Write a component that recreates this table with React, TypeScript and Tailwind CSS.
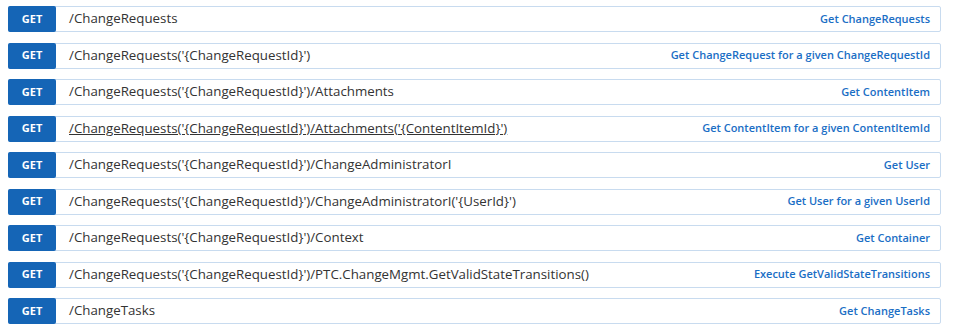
const rows: { path: string; desc: string; hover?: boolean }[] = [
  { path: "/ChangeRequests", desc: "Get ChangeRequests" },
  { path: "/ChangeRequests('{ChangeRequestId}')", desc: "Get ChangeRequest for a given ChangeRequestId" },
  { path: "/ChangeRequests('{ChangeRequestId}')/Attachments", desc: "Get ContentItem" },
  {
    path: "/ChangeRequests('{ChangeRequestId}')/Attachments('{ContentItemId}')",
    desc: "Get ContentItem for a given ContentItemId",
    hover: true,
  },
  { path: "/ChangeRequests('{ChangeRequestId}')/ChangeAdministratorI", desc: "Get User" },
  { path: "/ChangeRequests('{ChangeRequestId}')/ChangeAdministratorI('{UserId}')", desc: "Get User for a given UserId" },
  { path: "/ChangeRequests('{ChangeRequestId}')/Context", desc: "Get Container" },
  {
    path: "/ChangeRequests('{ChangeRequestId}')/PTC.ChangeMgmt.GetValidStateTransitions()",
    desc: "Execute GetValidStateTransitions",
  },
  { path: "/ChangeTasks", desc: "Get ChangeTasks" },
];

export default function App() {
  return (
    <div className="w-[955px] h-[327px] bg-white pl-2 pt-[6px] font-['Open_Sans',sans-serif]">
      <div className="w-[933px] flex flex-col gap-[10.5px]">
        {rows.map((r) => (
          <div
            key={r.path}
            className="h-[26px] flex items-center border border-[#c8dbef] rounded-[2px] bg-white"
          >
            <span className="-ml-px -my-px h-[26px] w-[48px] shrink-0 flex items-center justify-center rounded-[2px] bg-[#1565b6] text-white text-[11px] font-bold">
              GET
            </span>
            <span
              className={`ml-[13px] text-[13.3px] text-[#333] ${r.hover ? "underline" : ""}`}
            >
              {r.path}
            </span>
            <span className="ml-auto pr-[10px] text-[11px] font-semibold text-[#1a6ec5]">
              {r.desc}
            </span>
          </div>
        ))}
      </div>
    </div>
  );
}
